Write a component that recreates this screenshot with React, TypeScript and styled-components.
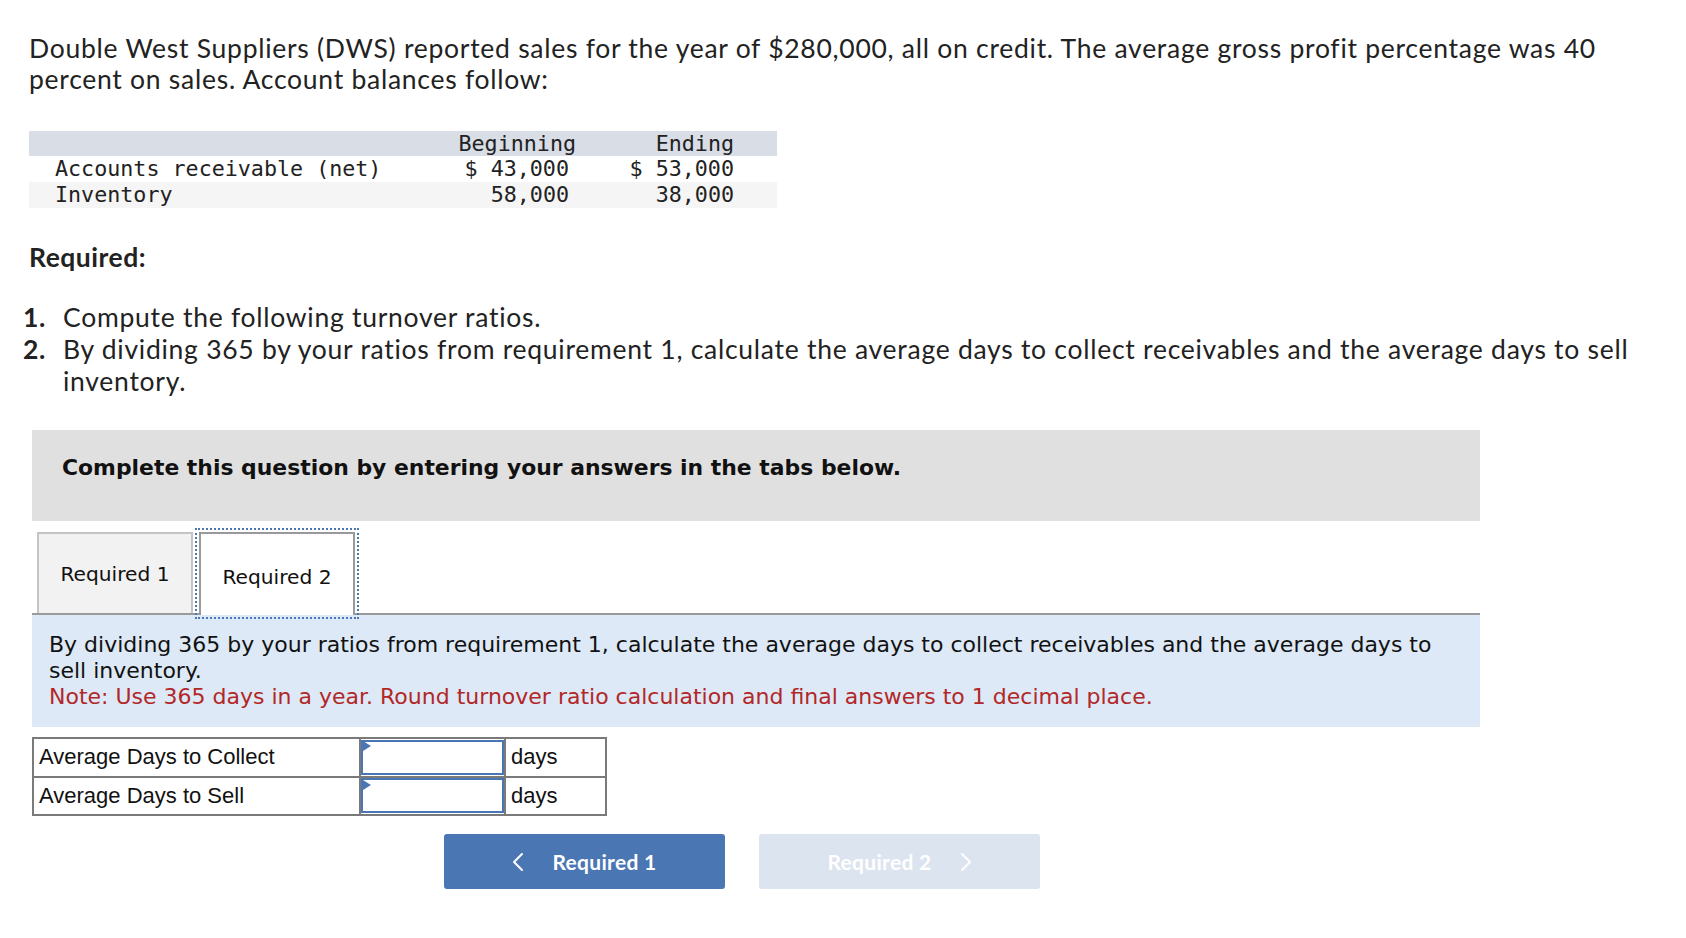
import React from "react";
import styled, { createGlobalStyle } from "styled-components";

const GlobalStyle = createGlobalStyle`
  html, body { margin: 0; padding: 0; background: #ffffff; }
  body { font-family: "Lato", "Open Sans", sans-serif; color: #222222; }
  * { box-sizing: border-box; }
`;

const Page = styled.div`
  padding: 33px 40px 40px 29px;
  width: 1686px;
`;

const Intro = styled.p`
  margin: 0;
  font-family: "Lato", sans-serif;
  font-size: 26.5px;
  letter-spacing: 0.73px;
  line-height: 31px;
  color: #222222;
`;

const BalanceTable = styled.div`
  margin-top: 36px;
  width: 748px;
  display: grid;
  grid-template-columns: 420px 127px 201px;
  font-family: "DejaVu Sans Mono", monospace;
  font-size: 21.7px;
  color: #222222;
`;

const BalanceRow = styled.div<{ $shade: "head" | "plain" | "light" }>`
  display: contents;
  & > div {
    background: ${(p) =>
      p.$shade === "head" ? "#d9dde6" : p.$shade === "light" ? "#f5f5f5" : "#ffffff"};
    height: ${(p) => (p.$shade === "head" ? "25px" : "26px")};
    line-height: ${(p) => (p.$shade === "head" ? "25px" : "26px")};
    white-space: pre;
  }
`;

const LabelCell = styled.div`
  padding-left: 26px;
`;

const AmountCell = styled.div<{ $padRight: number }>`
  text-align: right;
  padding-right: ${(p) => p.$padRight}px;
`;

const RequiredHeading = styled.h3`
  margin: 34px 0 0;
  font-family: "Lato", sans-serif;
  font-weight: 700;
  font-size: 26.5px;
  letter-spacing: 0.5px;
  line-height: 31px;
`;

const ReqList = styled.div`
  margin: 28px 0 0 -16px;
  display: flex;
  flex-direction: column;
  font-family: "Lato", sans-serif;
  font-size: 26.5px;
  letter-spacing: 0.73px;
  line-height: 32px;
`;

const ReqItem = styled.div`
  display: grid;
  grid-template-columns: 33px 1fr;
  column-gap: 17px;
`;

const ReqNum = styled.span`
  font-weight: 700;
  text-align: right;
`;

const Question = styled.section`
  margin: 33px 0 0 3px;
  width: 1448px;
`;

const Instruction = styled.div`
  height: 91px;
  background: #e0e0e0;
  padding: 25px 30px 0;
  font-family: "DejaVu Sans", Verdana, sans-serif;
  font-weight: 700;
  font-size: 21.9px;
  line-height: 26px;
  color: #111111;
`;

const TabBar = styled.div`
  margin-top: 11px;
  display: flex;
  align-items: flex-end;
  gap: 6px;
  padding-left: 5px;
  border-bottom: 2px solid #9a9a9a;
`;

const Tab = styled.div<{ $active?: boolean }>`
  width: 156px;
  display: flex;
  align-items: center;
  justify-content: center;
  font-family: "DejaVu Sans", Verdana, sans-serif;
  font-size: 20.2px;
  color: #111111;
  background: ${(p) => (p.$active ? "#ffffff" : "#f2f2f2")};
  border: 2px solid ${(p) => (p.$active ? "#9a9a9a" : "#c4c4c4")};
  border-bottom: none;
  padding-top: ${(p) => (p.$active ? "4px" : "0")};
  outline: ${(p) => (p.$active ? "2px dotted #4a76b4" : "none")};
  outline-offset: 2px;
  margin-bottom: ${(p) => (p.$active ? "-2px" : "0")};
  height: ${(p) => (p.$active ? "83px" : "81px")};
`;

const Prompt = styled.div`
  background: #dde9f6;
  padding: 17px 34px 17px 17px;
  font-family: "DejaVu Sans", Verdana, sans-serif;
  font-size: 22px;
  line-height: 26px;
  color: #111111;
`;

const Note = styled.span`
  display: block;
  color: #b22727;
`;

const AnswerTable = styled.table`
  margin-top: 10px;
  border-collapse: collapse;
  font-family: "Liberation Sans", Arial, sans-serif;
  font-size: 22px;
  color: #111111;
`;

const ACell = styled.td<{ $w: number }>`
  width: ${(p) => p.$w}px;
  height: 38.6px;
  border: 2px solid #7a7a7a;
  padding: 0 0 0 5px;
  vertical-align: middle;
`;

const InputCell = styled.td`
  width: 145px;
  height: 38.6px;
  border: 2px solid #7a7a7a;
  padding: 0;
  position: relative;
  &::before {
    content: "";
    position: absolute;
    left: 2px;
    top: 2px;
    border-top: 5px solid transparent;
    border-bottom: 5px solid transparent;
    border-left: 8px solid #4a76b4;
  }
`;

const InputBox = styled.div`
  height: 35px;
  margin: 0;
  border: 2px solid #4a76b4;
`;

const NavRow = styled.div`
  margin-top: 18px;
  padding-left: 412px;
  display: flex;
  gap: 34px;
`;

const NavButton = styled.button<{ $disabled?: boolean }>`
  width: 281px;
  height: 55px;
  border: none;
  border-radius: 3px;
  background: ${(p) => (p.$disabled ? "#dce4ef" : "#4a76b4")};
  color: #ffffff;
  font-family: "Lato", sans-serif;
  font-weight: 700;
  font-size: 21px;
  letter-spacing: 0.3px;
  display: flex;
  align-items: center;
  justify-content: center;
  gap: 28px;
  padding: 0;
  cursor: pointer;
`;

const Chevron = ({ dir }: { dir: "left" | "right" }) => (
  <svg width="12" height="20" viewBox="0 0 12 20" fill="none">
    <polyline
      points={dir === "left" ? "10,2 2,10 10,18" : "2,2 10,10 2,18"}
      stroke="#ffffff"
      strokeWidth="2"
      strokeLinecap="round"
      strokeLinejoin="round"
    />
  </svg>
);

const balances = [
  { shade: "head" as const, label: "", b: "Beginning", bPad: 0, e: "Ending" },
  { shade: "plain" as const, label: "Accounts receivable (net)", b: "$ 43,000", bPad: 7, e: "$ 53,000" },
  { shade: "light" as const, label: "Inventory", b: "58,000", bPad: 7, e: "38,000" },
];

export default function App() {
  return (
    <>
      <GlobalStyle />
      <Page>
        <Intro>
          Double West Suppliers (DWS) reported sales for the year of $280,000, all on credit. The
          average gross profit percentage was 40 percent on sales. Account balances follow:
        </Intro>

        <BalanceTable>
          {balances.map((r, i) => (
            <BalanceRow key={i} $shade={r.shade}>
              <LabelCell>{r.label}</LabelCell>
              <AmountCell $padRight={r.bPad}>{r.b}</AmountCell>
              <AmountCell $padRight={43}>{r.e}</AmountCell>
            </BalanceRow>
          ))}
        </BalanceTable>

        <RequiredHeading>Required:</RequiredHeading>
        <ReqList>
          <ReqItem>
            <ReqNum>1.</ReqNum>
            <span>Compute the following turnover ratios.</span>
          </ReqItem>
          <ReqItem>
            <ReqNum>2.</ReqNum>
            <span>
              By dividing 365 by your ratios from requirement 1, calculate the average days to
              collect receivables and the average days to sell inventory.
            </span>
          </ReqItem>
        </ReqList>

        <Question>
          <Instruction>Complete this question by entering your answers in the tabs below.</Instruction>
          <TabBar>
            <Tab>Required 1</Tab>
            <Tab $active>Required 2</Tab>
          </TabBar>
          <Prompt>
            By dividing 365 by your ratios from requirement 1, calculate the average days to
            collect receivables and the average days to sell inventory.
            <Note>
              Note: Use 365 days in a year. Round turnover ratio calculation and final answers to 1
              decimal place.
            </Note>
          </Prompt>
          <AnswerTable>
            <tbody>
              <tr>
                <ACell $w={327}>Average Days to Collect</ACell>
                <InputCell>
                  <InputBox />
                </InputCell>
                <ACell $w={101}>days</ACell>
              </tr>
              <tr>
                <ACell $w={327}>Average Days to Sell</ACell>
                <InputCell>
                  <InputBox />
                </InputCell>
                <ACell $w={101}>days</ACell>
              </tr>
            </tbody>
          </AnswerTable>
          <NavRow>
            <NavButton>
              <Chevron dir="left" />
              <span>Required 1</span>
            </NavButton>
            <NavButton $disabled>
              <span>Required 2</span>
              <Chevron dir="right" />
            </NavButton>
          </NavRow>
        </Question>
      </Page>
    </>
  );
}
